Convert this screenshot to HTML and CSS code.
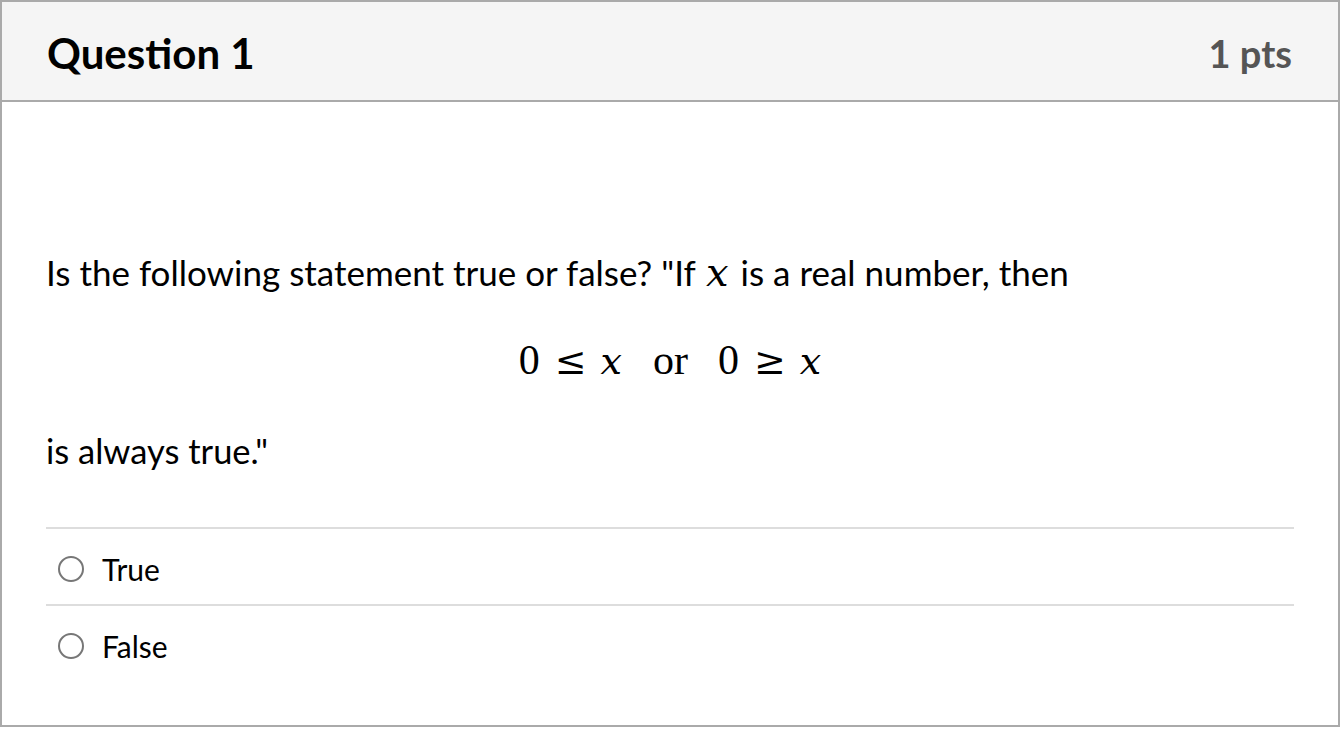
FILE: index.html
```html
<!DOCTYPE html>
<html>
<head>
<meta charset="utf-8">
<link rel="stylesheet" href="styles.css">
</head>
<body>
<div class="question">
  <div class="header">
    <h2 class="title">Question 1</h2>
    <div class="pts">1 pts</div>
  </div>
  <div class="content">
    <p class="text">Is the following statement true or false? "If <span class="mi">x</span> is a real number, then</p>
    <div class="display">
      <span class="mn">0</span><span class="mo">≤</span><span class="mi">x</span><span class="mtext">or</span><span class="mn">0</span><span class="mo">≥</span><span class="mi">x</span>
    </div>
    <p class="text last">is always true."</p>
    <div class="answers">
      <label class="answer"><span class="radio"></span><span class="label">True</span></label>
      <label class="answer"><span class="radio"></span><span class="label">False</span></label>
    </div>
  </div>
</div>
</body>
</html>
```
FILE: styles.css
```css
html, body {
  margin: 0;
  padding: 0;
  background: #fff;
}
body {
  font-family: Lato, "Liberation Sans", sans-serif;
  color: #000;
}
.question {
  width: 1340px;
  height: 727px;
  box-sizing: border-box;
  border: 2px solid #aaaaaa;
  display: flex;
  flex-direction: column;
}
.header {
  height: 100px;
  flex: none;
  box-sizing: border-box;
  background: #f5f5f5;
  border-bottom: 2px solid #aaaaaa;
  display: flex;
  align-items: center;
  justify-content: space-between;
  padding: 3px 46px 0 45px;
}
.title {
  margin: 0;
  font-size: 42px;
  font-weight: 700;
  color: #000;
}
.pts {
  font-size: 38px;
  font-weight: 700;
  color: #555;
}
.content {
  padding: 144px 44px 0 44px;
}
.text {
  margin: 0;
  font-size: 35px;
  line-height: 52px;
}
.text.last {
  font-size: 34.5px;
}
.mi {
  font-family: "DejaVu Serif", "Liberation Serif", serif;
  font-style: italic;
  font-size: 38px;
}
.text .mi {
  font-size: 40px;
  line-height: 0;
  margin: 0 3px 0 2px;
}
.display {
  text-align: center;
  font-family: "Liberation Serif", "DejaVu Serif", serif;
  font-size: 42px;
  margin: 32px 0 34px;
  line-height: 60px;
}
.mo {
  font-family: "DejaVu Serif", serif;
  font-size: 38px;
  margin: 0 14px 0 15px;
}
.mtext { margin: 0 30px 0 31px; }
.answers {
  margin-top: 50px;
}
.answer {
  display: flex;
  align-items: center;
  height: 77px;
  box-sizing: border-box;
  padding-top: 4px;
  border-top: 2px solid #dddddd;
  font-size: 30px;
}
.radio {
  width: 22px;
  height: 22px;
  border: 2px solid #777;
  border-radius: 50%;
  margin: 0 18px 0 12px;
  box-sizing: content-box;
}
```
